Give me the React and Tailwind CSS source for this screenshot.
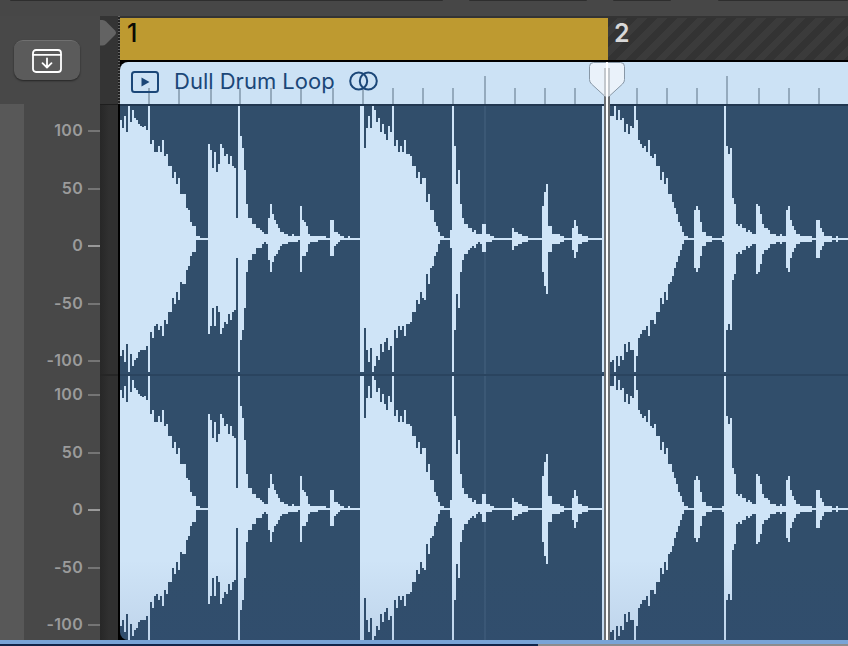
import clsx from 'clsx'

const SCALE = [100, 50, 0, -50, -100]

// short marks on every 16th, taller ones on the beat
const TICKS = [148, 178, 210, 239, 270, 300, 332, 362, 392, 422, 452, 484, 514, 544, 574, 636, 666, 696, 726, 758, 788, 818]
const TALL_TICKS = [484, 726]

// Peaks are sampled every 2px. `top` and `bottom` are y values around CENTER,
// a missing bottom mirrors the top.
const CENTER = 239
const SEGMENTS = [
  {
    x: 120,
    top: [120, 128, 116, 132, 106, 122, 110, 118, 120, 124, 126, 127, 126, 130, 106, 144, 140, 152, 152, 146, 152, 140, 156, 154, 166, 166, 178, 172, 184, 178, 194, 194, 194, 208, 210, 222, 226, 226, 236, 236, 238, 238, 238, 238],
    bottom: [356, 350, 362, 344, 372, 354, 366, 360, 358, 352, 350, 350, 350, 346, 372, 332, 338, 326, 324, 330, 326, 336, 320, 324, 312, 312, 298, 304, 292, 300, 282, 284, 284, 270, 266, 256, 252, 252, 240, 240, 240, 240, 240, 240],
  },
  {
    x: 208,
    top: [144, 150, 168, 152, 172, 164, 144, 148, 156, 154, 164, 156, 166, 168, 218, 106, 136, 148, 170, 204, 218, 218, 224, 224, 228, 228, 230, 232, 234, 234],
    bottom: [334, 326, 308, 326, 306, 312, 334, 328, 322, 324, 314, 320, 312, 310, 258, 372, 340, 330, 308, 272, 260, 260, 254, 254, 248, 248, 248, 244, 242, 244],
  },
  {
    x: 268,
    top: [218, 204, 214, 220, 224, 228, 232, 232, 234, 234, 236, 236, 234, 236, 236, 236],
    bottom: [260, 272, 262, 256, 254, 250, 246, 244, 244, 244, 242, 242, 242, 242, 242, 240],
  },
  {
    x: 300,
    top: [206, 220, 222, 226, 234, 236, 236, 236, 236, 236, 236, 236, 236, 238, 238],
    bottom: [272, 256, 256, 252, 244, 242, 242, 242, 242, 240, 240, 240, 240, 240, 240],
  },
  {
    x: 330,
    top: [220, 220, 232, 232, 234, 236, 236, 238, 238, 236, 238, 238, 238, 238, 238],
    bottom: [256, 256, 246, 244, 242, 240, 240, 240, 240, 240, 240, 240, 240, 240, 240],
  },
  {
    x: 360,
    top: [106, 106, 148, 128, 116, 128, 106, 110, 122, 118, 132, 124, 134, 140, 126, 132, 106, 146, 140, 152, 146, 152, 140, 154, 154, 156, 166, 166, 178, 172, 184, 178, 178, 202, 194, 210, 210, 222, 226, 232, 236, 236, 238, 238, 238],
    bottom: [372, 372, 328, 350, 362, 348, 372, 366, 356, 360, 344, 352, 342, 338, 350, 346, 372, 330, 338, 326, 330, 326, 336, 324, 324, 322, 312, 312, 300, 304, 292, 298, 300, 274, 284, 268, 266, 256, 252, 244, 240, 240, 240, 240, 240],
  },
  {
    x: 450,
    top: [230, 106, 146, 184, 170, 204, 218, 224, 224, 228, 228, 232, 230, 234, 234, 234, 224, 224, 234, 234, 236, 236, 238, 238, 238, 238, 238, 238, 238, 238, 238],
    bottom: [248, 372, 330, 294, 308, 272, 260, 254, 254, 250, 248, 246, 248, 244, 242, 244, 252, 252, 242, 242, 242, 240, 240, 240, 240, 240, 240, 240, 240, 240, 240],
  },
  {
    x: 512,
    top: [228, 232, 232, 234, 234, 236, 236, 236, 238, 238, 238, 238, 238, 238, 238, 206, 192, 184, 226, 226, 234, 234, 234, 234, 236, 236, 238, 238, 238, 238, 228, 220, 226, 234, 234, 236, 236, 236, 238, 238, 238, 238, 238, 238, 238, 106, 238, 238],
  },
  {
    x: 608,
    top: [120, 116, 116, 106, 120, 110, 120, 118, 132, 124, 134, 126, 128, 106, 120, 140, 144, 148, 146, 152, 140, 156, 158, 154, 166, 166, 180, 172, 184, 178, 194, 194, 202, 208, 214, 222, 226, 232, 236, 236, 238, 238, 238],
    bottom: [356, 362, 360, 372, 356, 366, 356, 360, 344, 352, 342, 350, 350, 372, 356, 338, 334, 330, 330, 326, 336, 320, 320, 324, 312, 312, 298, 304, 292, 300, 284, 282, 276, 268, 262, 256, 250, 244, 240, 240, 240, 240, 240],
  },
  {
    x: 694,
    top: [210, 206, 210, 222, 232, 232, 236, 236, 236, 238, 238, 238, 238, 238, 236],
  },
  {
    x: 724,
    top: [106, 146, 154, 148, 198, 204, 224, 226, 224, 228, 228, 232, 230, 232, 234, 234],
    bottom: [372, 330, 324, 330, 280, 274, 254, 252, 254, 250, 250, 246, 248, 246, 244, 244],
  },
  {
    x: 756,
    top: [204, 206, 214, 224, 228, 228, 230, 234, 234, 234, 236, 236, 234, 236, 236, 210, 206, 220, 226, 230, 234, 234, 236, 236, 236, 236, 236, 236, 238, 238, 220, 220, 228, 232, 236, 236, 236, 236, 238, 238, 236, 238, 238, 238, 238, 238],
  },
]

const BARS = SEGMENTS.flatMap(({ x, top, bottom }) =>
  top.map((y, i) => ({ x: x + i * 2, y, end: bottom ? bottom[i] : CENTER * 2 - y }))
)
const WAVE_PATH = BARS.map((b) => `M${b.x - 120} ${b.y - 104}h2V${b.end - 104}h-2z`).join('')

function Lane({ className }) {
  return (
    <svg className={clsx('block w-[728px] shrink-0', className)} shapeRendering="crispEdges">
      <rect x="364" width="2" height="270" fill="#3b5875" />
      <path d={WAVE_PATH} fill="#cfe4f7" />
    </svg>
  )
}

function ScaleLabels() {
  return (
    <div className="flex h-[246px] flex-col justify-between">
      {SCALE.map((value) => (
        <div key={value} className="flex h-4 items-center justify-end gap-[5px]">
          <span className="text-[16px] leading-4 font-semibold tracking-[0.3px] text-[#9b9b9b]">{value}</span>
          <span className={clsx('mt-[2px] h-[2px] w-3', value === 0 ? 'bg-[#999]' : 'bg-[#757575]')} />
        </div>
      ))}
    </div>
  )
}

function Sidebar() {
  return (
    <div className="flex w-[100px] shrink-0 flex-col bg-[#484848]">
      <div className="h-[88px] pt-6 pl-[14px]">
        <button className="flex h-10 w-[66px] items-center justify-center rounded-[9px] border-t border-[#707070] bg-[#5b5b5b] shadow-[0_1px_2px_rgba(0,0,0,0.5)]">
          <svg width="30" height="24" viewBox="0 0 30 24" fill="none" stroke="#fff" strokeWidth="1.8" strokeLinecap="round" strokeLinejoin="round">
            <rect x="1" y="1" width="28" height="22" rx="3" />
            <path d="M1 5.8h28M15 9.3v9M10.5 14.2l4.5 4.3 4.5-4.3" />
          </svg>
        </button>
      </div>
      <div className="flex flex-1">
        <div className="w-6 bg-[#585858]" />
        <div className="flex flex-1 flex-col gap-[18px] pt-[18px]">
          <ScaleLabels />
          <ScaleLabels />
        </div>
      </div>
    </div>
  )
}

function Gutter() {
  return (
    <div className="flex w-[18px] shrink-0 flex-col bg-[#343434]">
      <svg width="18" height="88" className="block">
        <path d="M0 4h2.500q2 0 3.500 1.500l9 9q2 2.300 0 4.600l-9 9q-1.500 1.500-3.500 1.500H0z" fill="#636363" />
      </svg>
      <div className="h-[270px] border-t border-[#1e1e1e] bg-linear-to-r from-[#272727] via-[#303030] to-[#303030]" />
      <div className="flex-1 border-t-2 border-[#262626] bg-linear-to-r from-[#272727] via-[#303030] to-[#303030]" />
    </div>
  )
}

function Ruler() {
  return (
    <div className="flex h-11 shrink-0 border-t-2 border-[#343434]">
      <div className="w-[488px] bg-[#be9a30] pl-[7px] text-[25px] leading-[31px] font-medium text-[#0c0a04]">1</div>
      <div className="flex-1 bg-[repeating-linear-gradient(135deg,#333_0_7px,#3b3b3b_7px_14px)] pl-[6px] text-[25px] leading-[31px] font-semibold text-[#d8d8d8]">
        2
      </div>
    </div>
  )
}

function RegionHeader() {
  return (
    <div className="relative h-[42px] shrink-0 rounded-tl-lg bg-[#cce2f5]">
      <svg className="absolute inset-0 h-[42px] w-[728px]" shapeRendering="crispEdges">
        {TICKS.map((x) => (
          <rect key={x} x={x - 120} y={TALL_TICKS.includes(x) ? 14 : 26} width="2" height="28" fill="#94aabd" />
        ))}
      </svg>
      <div className="relative flex h-[37px] items-center pl-[11px] text-[#1b4778]">
        <svg width="28" height="22" viewBox="0 0 28 22" className="mt-[2px]">
          <rect x="1" y="1" width="26" height="20" rx="2.500" fill="none" stroke="currentColor" strokeWidth="2" />
          <path d="M10.500 6.500v9l8-4.500z" fill="currentColor" />
        </svg>
        <span className="ml-[15px] w-[162px] text-[22px] leading-6 whitespace-nowrap">Dull Drum Loop</span>
        <svg width="29" height="20" viewBox="0 0 29 20" className="ml-[13px]" fill="none" stroke="currentColor" strokeWidth="2">
          <circle cx="9.700" cy="10" r="8.500" />
          <circle cx="19.300" cy="10" r="8.500" />
        </svg>
      </div>
    </div>
  )
}

function Playhead() {
  return (
    <svg className="absolute top-[62px] left-[588px] h-[578px] w-[38px]">
      <path d="M16 0h6v578h-6z" fill="#6b6f73" />
      <path
        d="M5.500 .5h27q4 0 4 4v13q0 2.500-2 4.500L22 33.500q-3 2.500-6 0L3.500 22q-2-2-2-4.500v-13q0-4 4-4z"
        fill="#eaf2fa"
        stroke="#8797a6"
      />
      <path d="M16 6h2v28h-2zM20 6h2v28h-2z" fill="#c3c8cd" />
      <path d="M18 0h2v578h-2z" fill="#fff" />
    </svg>
  )
}

export default function App() {
  return (
    <div className="relative flex h-[646px] w-[848px] flex-col overflow-hidden bg-[#484848] font-['Inter',sans-serif]">
      {/* Bottom edge of the toolbar */}
      <div className="flex h-4 shrink-0 gap-[26px] bg-[#474747] pl-[10px]">
        <div className="h-px w-[433px] rounded-b bg-[#2e2e2e]" />
        <div className="h-px w-[118px] rounded-b bg-[#2e2e2e]" />
        <div className="h-px w-[58px] rounded-b bg-[#2e2e2e]" />
        <div className="ml-[21px] h-px flex-1 rounded-b bg-[#2e2e2e]" />
      </div>

      <div className="flex h-[624px] shrink-0">
        <Sidebar />
        <Gutter />
        <div className="w-[2px] bg-black">
          <div className="h-[88px] bg-[repeating-linear-gradient(#666_0_1px,#222_1px_3px)]" />
        </div>
        <div className="flex flex-1 flex-col bg-black">
          <Ruler />
          <div className="h-[2px] shrink-0" />
          <RegionHeader />
          <div className="relative flex h-[536px] flex-col overflow-hidden rounded-bl-lg bg-[#314e6b]">
            <Lane className="h-[270px]" />
            <Lane className="h-[266px]" />
            <div className="absolute inset-x-0 top-[270px] h-[2px] bg-[#2a445f]" />
            <div className="absolute inset-x-0 top-0 h-[2px] bg-[#213750]" />
            <div className="absolute inset-x-0 bottom-0 h-[80px] bg-linear-to-b from-[#304a80]/0 to-[#304a80]/10" />
          </div>
        </div>
      </div>

      {/* Focus border and the scrollbar under it */}
      <div className="h-1 shrink-0 bg-[#78a4d7]" />
      <div className="flex h-[2px] shrink-0">
        <div className="w-[538px] bg-[#11264a]" />
        <div className="flex-1 bg-[#8a8c8e]" />
      </div>

      <Playhead />
    </div>
  )
}
